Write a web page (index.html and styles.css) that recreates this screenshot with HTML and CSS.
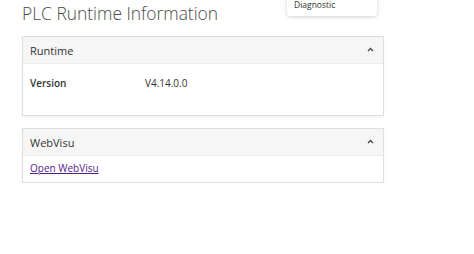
FILE: index.html
```html
<!DOCTYPE html>
<html>
<head>
<meta charset="utf-8">
<link rel="stylesheet" href="styles.css">
</head>
<body>
<div class="page">
  <h1 class="title">PLC Runtime Information</h1>
  <div class="card">
    <div class="card-header"><span>Runtime</span><svg class="caret" width="7" height="5" viewBox="0 0 7 5"><path d="M1 4 L3.5 1.5 L6 4" fill="none" stroke="#444" stroke-width="1.3"/></svg></div>
    <div class="card-body runtime-body">
      <div class="row"><span class="label">Version</span><span class="value">V4.14.0.0</span></div>
    </div>
  </div>
  <div class="card card-second">
    <div class="card-header"><span>WebVisu</span><svg class="caret" width="7" height="5" viewBox="0 0 7 5"><path d="M1 4 L3.5 1.5 L6 4" fill="none" stroke="#444" stroke-width="1.3"/></svg></div>
    <div class="card-body link-body">
      <a class="link" href="#">Open WebVisu</a>
    </div>
  </div>
</div>
<div class="menu"><div class="menu-item">Diagnostic</div></div>
</body>
</html>
```
FILE: styles.css
```css
html, body { margin: 0; padding: 0; background: #fff; }
body { font-family: "Open Sans", sans-serif; color: #333; }
.page { width: 362px; padding: 1px 0 0 22px; }
.title { margin: 0; font-weight: 300; font-size: 17.4px; line-height: 24px; color: #4a4a4a; }
.card { border: 1px solid #dedede; box-shadow: 0 1px 2px rgba(0,0,0,0.06); margin-top: 11px; background: #fff; }
.card-second { margin-top: 12px; }
.card-header { background: #f6f6f6; height: 26px; display: flex; align-items: center; justify-content: space-between; padding: 0 9px 0 7px; font-size: 11px; color: #333; border-bottom: 1px solid #ececec; }
.caret { display: block; margin-top: -1px; }
.card-body { font-size: 10px; line-height: 14px; padding: 0 7px; }
.runtime-body { height: 51px; padding-top: 12px; box-sizing: border-box; }
.link-body { height: 26px; padding-top: 5px; box-sizing: border-box; }
.row { display: flex; }
.label { width: 115px; font-weight: 600; }
.link { color: #551a8b; }
.menu { position: absolute; left: 287px; top: -4px; width: 90px; height: 20px; background: #fff; box-shadow: 0 1px 4px rgba(0,0,0,0.18); border-radius: 3px; }
.menu-item { font-size: 8.5px; line-height: 10px; padding: 4px 0 0 7px; color: #333; }
```
